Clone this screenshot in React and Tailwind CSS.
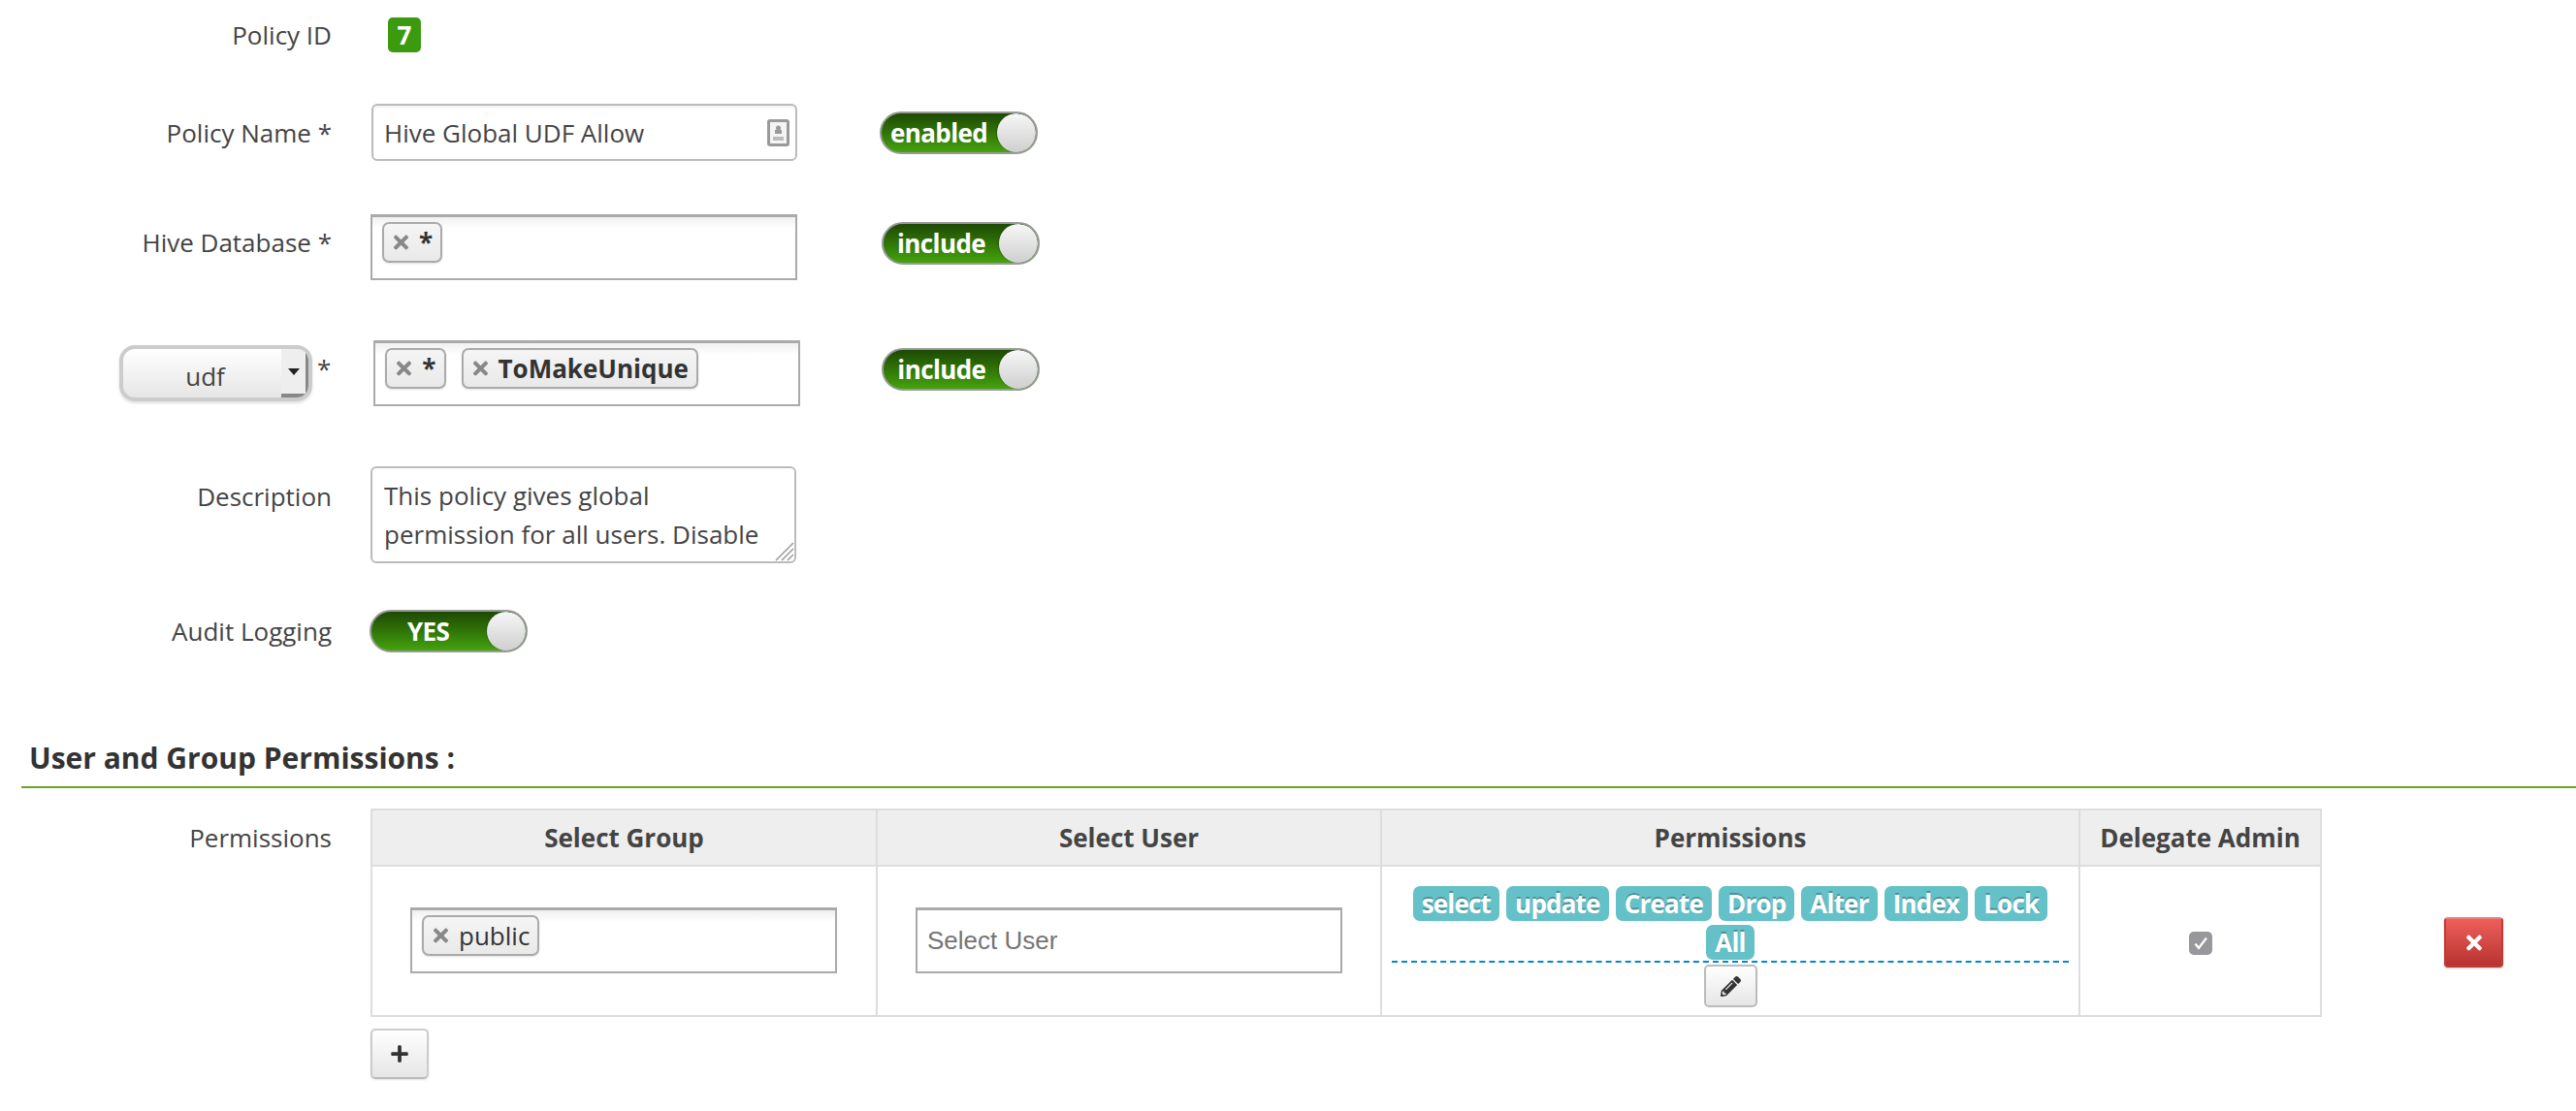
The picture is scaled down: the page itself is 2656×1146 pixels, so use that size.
import React from "react";
import { FaTimes, FaPlus, FaPencilAlt } from "react-icons/fa";

function Label({ children }) {
  return <div className="w-[342px] shrink-0 text-right text-[26px] leading-[36px] text-[#444]">{children}</div>;
}

function Toggle({ label, className = "" }) {
  return (
    <div className={`flex h-[44px] w-[163px] shrink-0 items-center justify-between overflow-hidden rounded-full border-2 border-[#999] bg-gradient-to-b from-[#1d4a03] to-[#45a30e] ${className}`}>
      <span className="text-[26px] font-bold leading-[36px] tracking-[-0.6px] text-white">{label}</span>
      <span className="h-[40px] w-[40px] shrink-0 rounded-full bg-gradient-to-b from-[#f7f7f7] to-[#cfcfcf] shadow-[-1px_0_1px_rgba(0,0,0,0.25)]" />
    </div>
  );
}

function Token({ children, bold = false }) {
  return (
    <span className={`inline-flex h-[42px] items-center gap-[11px] rounded-[7px] border-2 border-[#aaa] bg-gradient-to-b from-[#f5f5f5] to-[#e9e9e9] pl-[10px] pr-[8px] text-[26px] leading-[36px] text-[#333] shadow-[0_1px_2px_rgba(0,0,0,0.12)] ${bold ? "font-bold" : ""}`}>
      <FaTimes className="h-[22px] w-[15px] text-[#888]" />
      {children}
    </span>
  );
}

function TokenBox({ children, className = "" }) {
  return (
    <div className={`flex h-[68px] w-[440px] shrink-0 items-start gap-[16px] border-2 border-t-[3px] border-[#aaa] bg-gradient-to-b from-[#f0f0f0] via-white via-[12px] to-white pl-[10px] pt-[5px] ${className}`}>
      {children}
    </div>
  );
}

function Tag({ children }) {
  return (
    <span className="inline-flex h-[36px] items-center rounded-[7px] bg-[#65c1c8] px-[9px] text-[26px] font-bold leading-[36px] tracking-[-0.8px] text-white [text-shadow:0_-2px_0_rgba(0,0,0,0.25)]">
      {children}
    </span>
  );
}

export default function App() {
  return (
    <div className="h-[1146px] w-[2656px] overflow-hidden bg-white pt-[18px] font-['Open_Sans',sans-serif] text-[#444]">
      <div className="flex h-[36px] items-center">
        <Label>Policy ID</Label>
        <span className="ml-[58px] flex h-[36px] w-[34px] items-center justify-center rounded-[5px] bg-[#3c9a0f] text-[26px] font-bold leading-none text-white">7</span>
      </div>

      <div className="mt-[53px] flex items-center">
        <Label>Policy Name *</Label>
        <div className="ml-[41px] flex h-[59px] w-[439px] shrink-0 items-center justify-between rounded-[6px] border-2 border-[#bbb] pl-[11px] pr-[3px] shadow-[inset_0_2px_2px_rgba(0,0,0,0.06)]">
          <span className="text-[26px] leading-[36px] text-[#444]">Hive Global UDF Allow</span>
          <svg width="24" height="28" viewBox="0 0 24 28" className="mr-[2px]">
            <rect x="1.5" y="1.5" width="20" height="25" rx="1.5" fill="#f4f4f4" stroke="#999" strokeWidth="3" />
            <circle cx="11.5" cy="9" r="2.5" fill="#999" />
            <rect x="8" y="11" width="7" height="4" fill="#999" />
            <rect x="6" y="18" width="11" height="4" fill="#bbb" />
          </svg>
        </div>
        <Toggle label="enabled" className="ml-[85px] pl-[9px]" />
      </div>

      <div className="mt-[55px] flex items-start">
        <div className="mt-[11px]"><Label>Hive Database *</Label></div>
        <TokenBox className="ml-[40px]"><Token bold>*</Token></TokenBox>
        <Toggle label="include" className="ml-[87px] mt-[8px] pl-[14px]" />
      </div>

      <div className="mt-[62px] flex items-start">
        <div className="ml-[123px] mt-[5px] flex h-[58px] w-[199px] shrink-0 overflow-hidden rounded-[16px] border-4 border-[#ccc] bg-gradient-to-b from-[#fff] to-[#e6e6e6] shadow-[0_2px_3px_rgba(0,0,0,0.12)]">
          <span className="flex-1 pl-[6px] pt-[10px] text-center text-[26px] leading-[36px] text-[#444]">udf</span>
          <span className="flex h-[50px] w-[28px] items-center justify-center border-b-[4px] border-r-[3px] border-b-[#888] border-r-[#888] bg-[#eee]">
            <svg width="12" height="7" viewBox="0 0 12 7"><path d="M0 0h12L6 7z" fill="#222" /></svg>
          </span>
        </div>
        <span className="ml-[5px] mt-[11px] text-[26px] leading-[36px] text-[#444]">*</span>
        <TokenBox className="ml-[44px]"><Token bold>*</Token><Token bold>ToMakeUnique</Token></TokenBox>
        <Toggle label="include" className="ml-[84px] mt-[8px] pl-[14px]" />
      </div>

      <div className="mt-[62px] flex items-start">
        <div className="mt-[13px]"><Label>Description</Label></div>
        <div className="relative ml-[40px] h-[100px] w-[439px] shrink-0 overflow-hidden rounded-[6px] border-2 border-[#bbb] pl-[12px] pt-[8px] text-[26px] leading-[40px] text-[#444]">
          <div>This policy gives global</div>
          <div>permission for all users. Disable</div>
          <svg width="20" height="20" viewBox="0 0 20 20" className="absolute bottom-0 right-0">
            <path d="M19 1L1 19M19 7L7 19M19 13L13 19" stroke="#999" strokeWidth="1.5" fill="none" />
          </svg>
        </div>
      </div>

      <div className="mt-[48px] flex items-center">
        <Label>Audit Logging</Label>
        <Toggle label="YES" className="ml-[39px] pl-[37px]" />
      </div>

      <div className="mt-[89px] pl-[30px] text-[30px] font-bold leading-[40px] text-[#333]">User and Group Permissions :</div>
      <div className="ml-[22px] mt-[9px] h-[2px] bg-[#6ba423]" />

      <div className="mt-[21px] flex items-start">
        <div className="mt-[12px]"><Label>Permissions</Label></div>
        <div className="ml-[40px] w-[2012px] shrink-0">
          <div className="grid h-[215px] grid-cols-[521px_520px_720px_247px] grid-rows-[58px_153px] border-2 border-[#ddd] text-[#444]">
            <div className="flex items-center justify-center border-b-2 border-r-2 border-[#ddd] bg-[#eee] text-[26px] font-bold">Select Group</div>
            <div className="flex items-center justify-center border-b-2 border-r-2 border-[#ddd] bg-[#eee] text-[26px] font-bold">Select User</div>
            <div className="flex items-center justify-center border-b-2 border-r-2 border-[#ddd] bg-[#eee] text-[26px] font-bold">Permissions</div>
            <div className="flex items-center justify-center border-b-2 border-[#ddd] bg-[#eee] text-[26px] font-bold">Delegate Admin</div>

            <div className="flex items-start border-r-2 border-[#ddd] pl-[39px] pt-[42px]">
              <TokenBox><Token>public</Token></TokenBox>
            </div>
            <div className="flex items-start border-r-2 border-[#ddd] pl-[39px] pt-[42px]">
              <div className="flex h-[68px] w-[440px] items-center border-2 border-t-[3px] border-[#aaa] pl-[10px] font-['Liberation_Sans',sans-serif] text-[26px] text-[#757575]">Select User</div>
            </div>
            <div className="border-r-2 border-[#ddd] px-[10px] pt-[20px]">
              <div className="flex flex-wrap justify-center gap-x-[7px] gap-y-[4px] border-b-2 border-dashed border-[#0088cc] pb-[1px]">
                {["select", "update", "Create", "Drop", "Alter", "Index", "Lock", "All"].map((t) => (
                  <Tag key={t}>{t}</Tag>
                ))}
              </div>
              <div className="flex justify-center pt-[2px]">
                <button className="flex h-[44px] w-[55px] items-center justify-center rounded-[5px] border-2 border-[#bbb] bg-gradient-to-b from-white to-[#e6e6e6] text-[#333]">
                  <FaPencilAlt className="h-[21px] w-[21px]" />
                </button>
              </div>
            </div>
            <div className="flex items-start justify-center pt-[67px]">
              <span className="flex h-[24px] w-[24px] items-center justify-center rounded-[5px] bg-[#97979c]">
                <svg width="24" height="24" viewBox="0 0 24 24"><path d="M6.5 12.5L10 17L18 6.5" stroke="#fff" strokeWidth="2.2" fill="none" /></svg>
              </span>
            </div>
          </div>
          <button className="mt-[12px] flex h-[52px] w-[60px] items-center justify-center rounded-[5px] border-2 border-[#ccc] border-b-[#bbb] bg-gradient-to-b from-white to-[#e6e6e6] text-[#333] shadow-[0_1px_2px_rgba(0,0,0,0.12)]">
            <FaPlus className="h-[20px] w-[20px]" />
          </button>
        </div>
        <button className="ml-[126px] mt-[112px] flex h-[52px] w-[61px] shrink-0 items-center justify-center rounded-[4px] border-2 border-[#c23a36] border-t-[#ee7f7b] bg-gradient-to-b from-[#ee5f5b] to-[#b73330] text-white shadow-[0_1px_2px_rgba(0,0,0,0.2)]">
          <FaTimes className="h-[23px] w-[16px]" />
        </button>
      </div>
    </div>
  );
}
